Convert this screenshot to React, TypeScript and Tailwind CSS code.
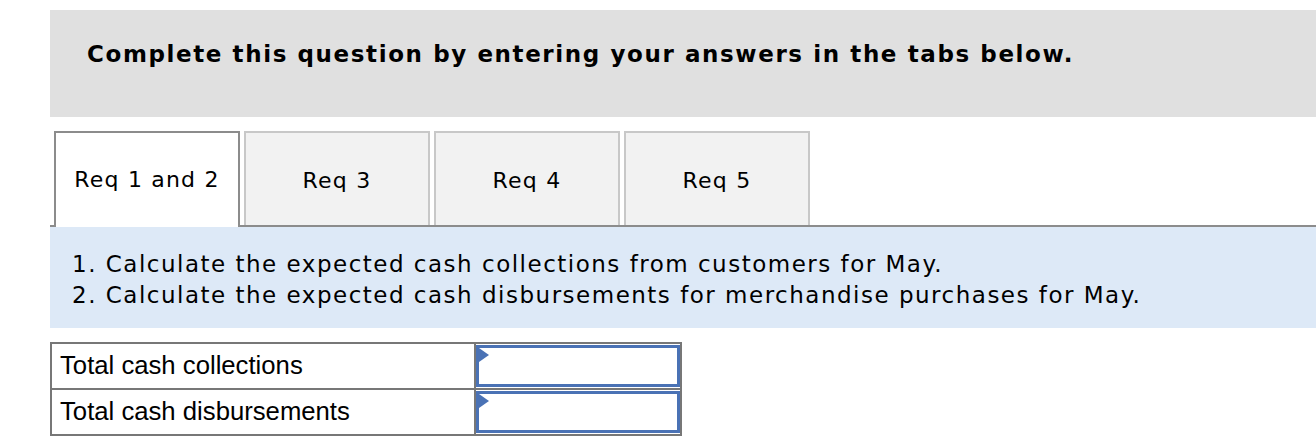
const tabs = ["Req 1 and 2", "Req 3", "Req 4", "Req 5"];

const rows = ["Total cash collections", "Total cash disbursements"];

export default function App() {
  const active = 0;

  return (
    <div className="w-[1316px] h-[448px] bg-white overflow-hidden pt-[10px] pl-[50px] font-['DejaVu_Sans',Verdana,sans-serif] text-black">
      <div className="h-[107px] bg-[#e0e0e0] pl-[37px] pt-[29px]">
        <h2 className="text-[23px] font-bold leading-[30px] tracking-[1.6px]">
          Complete this question by entering your answers in the tabs below.
        </h2>
      </div>

      <div className="mt-[14px] flex items-end border-b-2 border-[#8c8c8c] pl-[4px] gap-[4px]">
        {tabs.map((t, i) => (
          <div
            key={t}
            className={
              i === active
                ? "w-[186px] h-[96px] -mb-[2px] pb-[2px] flex items-center justify-center bg-white border-2 border-b-0 border-[#8c8c8c] text-[22px] tracking-[1.2px]"
                : "w-[186px] h-[94px] pt-[2px] flex items-center justify-center bg-[#f2f2f2] border-2 border-b-0 border-[#c8c8c8] text-[22px] tracking-[1.2px]"
            }
          >
            {t}
          </div>
        ))}
      </div>

      <div className="h-[101px] bg-[#dde9f7] pl-[22px] pt-[22px] text-[23px] leading-[31px] tracking-[1.5px]">
        <p>1. Calculate the expected cash collections from customers for May.</p>
        <p>2. Calculate the expected cash disbursements for merchandise purchases for May.</p>
      </div>

      <table className="mt-[14px] border-collapse font-['Liberation_Sans',Arial,sans-serif] text-[25.7px]">
        <tbody>
          {rows.map((r) => (
            <tr key={r} className="h-[46px]">
              <td className="w-[424px] border-2 border-[#777777] pl-[8px] pr-0 pb-[1px] leading-none">{r}</td>
              <td className="w-[206px] border-2 border-[#777777] p-0">
                <div className="relative h-[42px] border-[3px] border-[#4a72b5] bg-white">
                  <svg className="absolute left-0 top-0" width="10" height="14" viewBox="0 0 10 14">
                    <polygon points="0,0 10,7 0,14" fill="#4a72b5" />
                  </svg>
                </div>
              </td>
            </tr>
          ))}
        </tbody>
      </table>
    </div>
  );
}
